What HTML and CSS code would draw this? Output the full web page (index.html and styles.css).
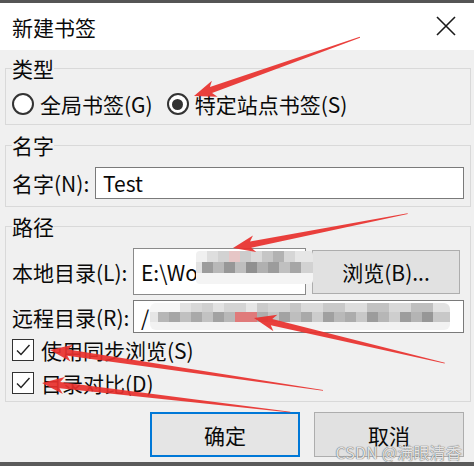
FILE: index.html
```html
<!DOCTYPE html>
<html lang="zh-CN">
<head>
<meta charset="utf-8">
<title>新建书签</title>
<link rel="stylesheet" href="styles.css">
</head>
<body>
<div class="win">
  <div class="topline"></div>
  <div class="titlebar">
    <span class="title">新建书签</span>
    <svg class="close" width="20" height="20" viewBox="0 0 20 20"><path d="M1 1L19 19M19 1L1 19" stroke="#1a1a1a" stroke-width="1.6" fill="none"/></svg>
  </div>
  <div class="content">
    <fieldset class="grp g1">
      <legend>类型</legend>
      <div class="radios">
        <label class="opt"><span class="radio"></span>全局书签(G)</label>
        <label class="opt"><span class="radio on"></span>特定站点书签(S)</label>
      </div>
    </fieldset>
    <fieldset class="grp g2">
      <legend>名字</legend>
      <div class="row">
        <span class="lbl lbl-n">名字(N):</span>
        <div class="input wide">Test</div>
      </div>
    </fieldset>
    <fieldset class="grp g3">
      <legend>路径</legend>
      <div class="row r1">
        <span class="lbl lbl-p">本地目录(L):</span>
        <div class="input local">E:\Wo<span class="mosaic m1"></span></div>
        <div class="btn browse">浏览(B)...</div>
      </div>
      <div class="row r2">
        <span class="lbl lbl-p">远程目录(R):</span>
        <div class="input wide remote">/<span class="mosaic m2"></span></div>
      </div>
      <label class="chk"><span class="box"><svg width="20" height="20" viewBox="0 0 20 20"><path d="M4 10.5L8 14.5L16.5 5" stroke="#222" stroke-width="1.4" fill="none"/></svg></span>使用同步浏览(S)</label>
      <label class="chk"><span class="box"><svg width="20" height="20" viewBox="0 0 20 20"><path d="M4 10.5L8 14.5L16.5 5" stroke="#222" stroke-width="1.4" fill="none"/></svg></span>目录对比(D)</label>
    </fieldset>
    <div class="buttons">
      <div class="btn default">确定</div>
      <div class="btn">取消</div>
    </div>
  </div>
  <div class="bottomline"></div>
  <div class="watermark">CSDN @满眼清香</div>
  <svg class="arrows" width="474" height="466" viewBox="0 0 474 466">
    <g fill="#e8302c" fill-opacity="0.92">
      <polygon transform="translate(194,96) rotate(-19.5)" points="0,0 22,-8.5 18,-3.2 176,-0.4 176,0.4 18,3.2 22,8.5"/>
      <polygon transform="translate(233,248) rotate(-11.1)" points="0,0 22,-8.5 18,-3.2 178,-0.4 178,0.4 18,3.2 22,8.5"/>
      <polygon transform="translate(254,318) rotate(13.3)" points="0,0 22,-8.5 18,-3.2 196,-0.4 196,0.4 18,3.2 22,8.5"/>
      <polygon transform="translate(50,350) rotate(8.4)" points="0,0 22,-8.5 18,-3.2 276,-0.4 276,0.4 18,3.2 22,8.5"/>
      <polygon transform="translate(42,383) rotate(6.7)" points="0,0 22,-8.5 18,-3.2 250,-0.4 250,0.4 18,3.2 22,8.5"/>
    </g>
  </svg>
</div>
</body>
</html>
```
FILE: styles.css
```css
* { box-sizing: border-box; }
html, body { margin: 0; padding: 0; background: #f0f0f0; }
body {
  font-family: "Noto Sans CJK SC", "Noto Sans", sans-serif;
  font-size: 21px;
  color: #0a0a0a;
}
.win {
  position: relative;
  width: 474px;
  height: 466px;
  overflow: hidden;
  display: flex;
  flex-direction: column;
  background: #f0f0f0;
}
.topline { height: 3px; background: #555; flex: none; }
.titlebar {
  height: 47px;
  flex: none;
  background: #fff;
  display: flex;
  align-items: center;
  justify-content: space-between;
  padding: 0 18px 0 12px;
}
.title { font-size: 21px; line-height: 24px; }
.close { display: block; margin-top: -2px; }
.content {
  flex: 1;
  padding: 6px 3px 0 5px;
  display: flex;
  flex-direction: column;
}
.grp {
  margin: 0;
  border: 1px solid #d9d9d9;
  padding: 0 6px;
  min-width: 0;
}
.grp legend {
  padding: 0;
  line-height: 24px;
  height: 24px;
}
.g1 { padding-top: 12px; padding-bottom: 8px; }
.g2 { margin-top: 8px; padding-top: 10px; padding-bottom: 7px; }
.g3 { margin-top: 7px; padding-top: 10px; padding-bottom: 2px; }

.radios { display: flex; align-items: center; height: 24px; gap: 14px; }
.opt { display: flex; align-items: center; gap: 6px; line-height: 24px; }
.radio {
  width: 22px; height: 22px;
  border: 2px solid #333;
  border-radius: 50%;
  background: #fff;
  display: flex;
  align-items: center;
  justify-content: center;
}
.radio.on::after {
  content: "";
  width: 11px; height: 11px;
  border-radius: 50%;
  background: #333;
}

.row { display: flex; align-items: center; }
.lbl { flex: none; line-height: 24px; }
.lbl-n { width: 83px; }
.lbl-p { width: 121px; }
.input {
  position: relative;
  background: #fff;
  border: 1px solid #7a7a7a;
  height: 32px;
  padding: 0 7px;
  display: flex;
  align-items: center;
  line-height: 24px;
}
.wide { flex: 1; }
.r1 { height: 47px; }
.input.local { width: 173px; height: 47px; border-color: #8a8a8a; }
.r2 { margin-top: 5px; }
.input.remote { height: 33px; }

.mosaic { position: absolute; display: block; }
.m1 {
  left: 62px; top: 2px; width: 117px; height: 33px;
  background:
    linear-gradient(to right, #f0f0f0 0 11px, #dedede 11px 22px, #d2d2d2 22px 33px, #e6c6c6 33px 44px, #cccccc 44px 55px, #dadada 55px 66px, #c6c6c6 66px 77px, #b2b2b2 77px 88px, #d6d6d6 88px 99px, #e6e6e6 99px 117px) 0 0 / 100% 11px no-repeat,
    linear-gradient(to right, #e2e2e2 0 6px, #9c9c9c 6px 17px, #b8b8b8 17px 28px, #979797 28px 39px, #bebebe 39px 50px, #909090 50px 61px, #b0b0b0 61px 72px, #9c9c9c 72px 83px, #c0c0c0 83px 94px, #a6a6a6 94px 105px, #d2d2d2 105px 117px) 0 11px / 100% 11px no-repeat,
    linear-gradient(to right, #f4f4f4 0 117px) 0 22px / 100% 11px no-repeat;
  border-radius: 4px;
}
.m2 {
  left: 16px; top: 2px; width: 300px; height: 27px;
  background:
    linear-gradient(to right, #f6f6f6 0 30px, #e2e2e2 30px 41px, #d8d8d8 41px 52px, #d0d0d0 52px 63px, #e2e2e2 63px 74px, #d4d4d4 74px 96px, #e6e6e6 96px 107px, #cbcbcb 107px 118px, #d4d4d4 118px 140px, #c6c6c6 140px 151px, #dadada 151px 173px, #c9c9c9 173px 195px, #dddddd 195px 217px, #c2c2c2 217px 239px, #d8d8d8 239px 261px, #bfbfbf 261px 283px, #e2e2e2 283px 300px) 0 0 / 100% 9px no-repeat,
    linear-gradient(to right, #e6e6e6 0 8px, #b6b6b6 8px 19px, #a6a6a6 19px 30px, #c0c0c0 30px 41px, #a9a9a9 41px 52px, #c2c2c2 52px 63px, #a2a2a2 63px 74px, #b8b8b8 74px 85px, #e07a7a 85px 107px, #aeaeae 107px 118px, #c4c4c4 118px 129px, #a3a3a3 129px 140px, #bebebe 140px 151px, #a9a9a9 151px 162px, #cccccc 162px 173px, #a0a0a0 173px 184px, #b9b9b9 184px 195px, #acacac 195px 206px, #c8c8c8 206px 217px, #9c9c9c 217px 228px, #b6b6b6 228px 239px, #cecece 239px 250px, #9d9d9d 250px 261px, #b4b4b4 261px 272px, #979797 272px 283px, #c8c8c8 283px 300px) 0 9px / 100% 10px no-repeat,
    linear-gradient(to right, #f2f2f2 0 300px) 0 19px / 100% 8px no-repeat;
  border-radius: 6px;
}

.btn {
  display: flex;
  align-items: center;
  justify-content: center;
  background: #e1e1e1;
  border: 1px solid #adadad;
  line-height: 24px;
}
.browse { width: 148px; height: 44px; margin-left: 6px; margin-right: 3px; }

.chk { display: flex; align-items: center; gap: 7px; height: 33px; line-height: 24px; }
.box {
  width: 22px; height: 22px;
  border: 1.5px solid #333;
  background: #fff;
  display: flex;
  align-items: center;
  justify-content: center;
}
.box svg { display: block; }

.buttons {
  margin-top: 10px;
  margin-bottom: 4px;
  display: flex;
  justify-content: flex-end;
  gap: 14px;
  padding-right: 7px;
}
.buttons .btn { width: 150px; height: 45px; }
.buttons .default { border: 2px solid #0078d7; background: #e5e5e5; }

.bottomline { height: 4px; background: #5a5a5a; flex: none; }

.watermark {
  position: absolute;
  right: 12px;
  bottom: 4px;
  font-size: 16px;
  line-height: 20px;
  color: rgba(250, 250, 250, 0.85);
  text-shadow: 0 0 1px #666, 0 0 1px #666;
  letter-spacing: 0.2px;
}
.arrows { position: absolute; left: 0; top: 0; pointer-events: none; }
```
